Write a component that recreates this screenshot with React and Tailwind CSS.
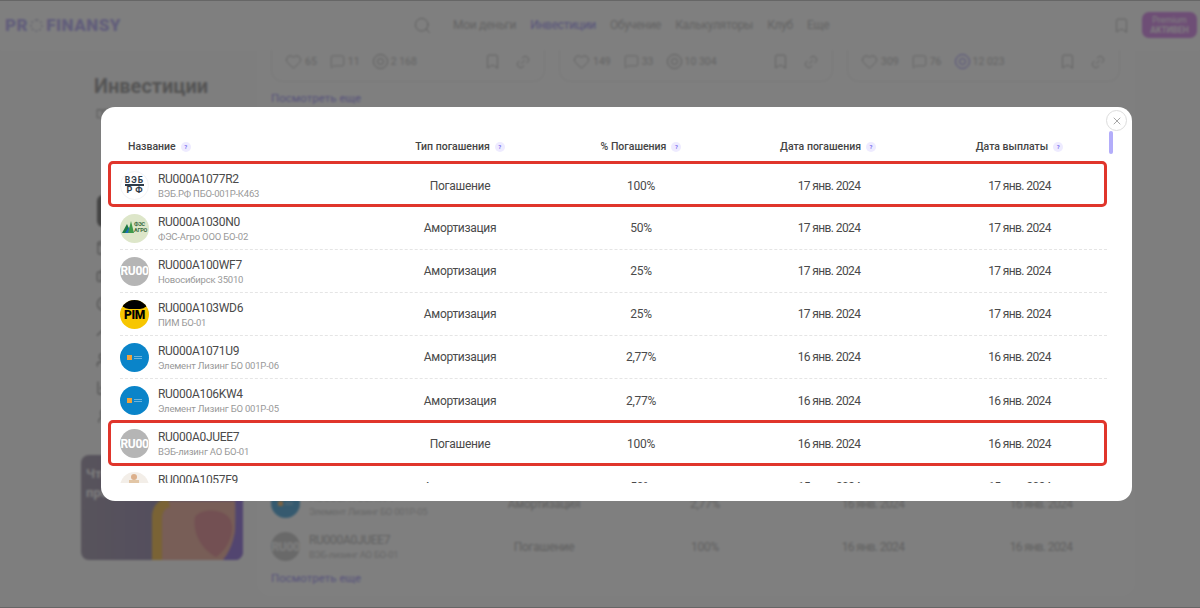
import { Search, Bookmark, Heart, MessageSquare, Link2, X, BookOpen, Briefcase, Wallet, CircleDollarSign, Users, TrendingUp, ChartLine, UserRound } from 'lucide-react'

const rows = [
  { code: 'RU000A1077R2', sub: 'ВЭБ.РФ ПБО-001Р-К463', type: 'Погашение', pct: '100%', date: '17 янв. 2024', pay: '17 янв. 2024', logo: 'veb', mark: true },
  { code: 'RU000A1030N0', sub: 'ФЭС-Агро ООО БО-02', type: 'Амортизация', pct: '50%', date: '17 янв. 2024', pay: '17 янв. 2024', logo: 'fes' },
  { code: 'RU000A100WF7', sub: 'Новосибирск 35010', type: 'Амортизация', pct: '25%', date: '17 янв. 2024', pay: '17 янв. 2024', logo: 'ru' },
  { code: 'RU000A103WD6', sub: 'ПИМ БО-01', type: 'Амортизация', pct: '25%', date: '17 янв. 2024', pay: '17 янв. 2024', logo: 'pim' },
  { code: 'RU000A1071U9', sub: 'Элемент Лизинг БО 001Р-06', type: 'Амортизация', pct: '2,77%', date: '16 янв. 2024', pay: '16 янв. 2024', logo: 'element' },
  { code: 'RU000A106KW4', sub: 'Элемент Лизинг БО 001Р-05', type: 'Амортизация', pct: '2,77%', date: '16 янв. 2024', pay: '16 янв. 2024', logo: 'element' },
  { code: 'RU000A0JUEE7', sub: 'ВЭБ-лизинг АО БО-01', type: 'Погашение', pct: '100%', date: '16 янв. 2024', pay: '16 янв. 2024', logo: 'ru', mark: true },
  { code: 'RU000A1057F9', sub: 'Сибирский КХП БО-01', type: 'Амортизация', pct: '50%', date: '15 янв. 2024', pay: '15 янв. 2024', logo: 'person' },
]

const backRows = [
  { code: 'RU000A106KW4', sub: 'Элемент Лизинг БО 001Р-05', type: 'Амортизация', pct: '2,77%', date: '16 янв. 2024', logo: 'element' },
  { code: 'RU000A0JUEE7', sub: 'ВЭБ-лизинг АО БО-01', type: 'Погашение', pct: '100%', date: '16 янв. 2024', logo: 'ru' },
]

const gridCols = 'grid grid-cols-[250px_180px_182px_192px_183px] items-center'

function Logo({ kind }) {
  if (kind === 'veb') {
    return (
      <div className="w-[29px] h-[29px] rounded-full border border-gray-100 bg-white flex flex-col items-center justify-center text-[#2c3a47] leading-none">
        <span className="text-[8.5px] font-bold tracking-[1px] leading-[8px] border-b-2 border-[#2c3a47]">ВЭБ</span>
        <span className="text-[9px] font-bold tracking-[3px] pl-[3px] leading-[9px]">РФ</span>
      </div>
    )
  }
  if (kind === 'fes') {
    return (
      <div className="relative w-[29px] h-[29px] rounded-full bg-[#dde6c9] overflow-hidden">
        <svg className="absolute inset-0" viewBox="0 0 29 29">
          <path d="M2 19 7 10l4 9z" fill="#1f7a45" />
          <path d="M5 19 9 13l3 6z" fill="#1d6fb8" />
          <path d="M8 19 11 7l3 12z" fill="#3f9a4a" />
        </svg>
        <span className="absolute left-[14px] top-[7px] w-[14px] text-[5.5px] font-bold leading-[6px] text-[#3c6b3f]">ФЭС АГРО</span>
      </div>
    )
  }
  if (kind === 'pim') {
    return (
      <div className="relative w-[29px] h-[29px] rounded-full bg-[#f7c600] overflow-hidden flex items-center justify-center">
        <div className="absolute top-0 left-0 right-0 h-[9px] bg-black rounded-b-[14px]" />
        <span className="text-[12px] font-black text-black leading-none mt-[1px]">PIM</span>
      </div>
    )
  }
  if (kind === 'element') {
    return (
      <div className="w-[29px] h-[29px] rounded-full bg-[#0a84c9] flex items-center justify-center gap-[2px]">
        <div className="w-[5px] h-[5px] bg-[#f2a33a]" />
        <div className="flex flex-col gap-[1px]">
          <div className="w-[8px] h-px bg-white/40" />
          <div className="w-[8px] h-px bg-white/40" />
        </div>
      </div>
    )
  }
  if (kind === 'person') {
    return (
      <div className="relative w-[29px] h-[29px] rounded-full bg-[#f3eee8] overflow-hidden">
        <div className="absolute left-[11px] top-[2px] w-[6px] h-[6px] rounded-full bg-[#dcb08c]" />
        <div className="absolute left-[9px] top-[8px] w-[10px] h-[14px] bg-[#e2c6a6]" />
      </div>
    )
  }
  return (
    <div className="w-[29px] h-[29px] rounded-full bg-[#b5b5b5] flex items-center justify-center overflow-hidden">
      <span className="text-[12px] font-bold text-white leading-none">RU00</span>
    </div>
  )
}

function Hint() {
  return (
    <span className="inline-flex w-[10px] h-[10px] rounded-full bg-[#eeebff] items-center justify-center text-[6px] text-[#7a6ff0] font-bold">?</span>
  )
}

function Head({ label }) {
  return (
    <div className="flex items-center justify-center gap-[5px] text-[10.5px] font-medium text-[#444]">
      {label}
      <Hint />
    </div>
  )
}

function Stats({ like, comm, views, active }) {
  return (
    <div className="flex items-center text-[10.5px] text-[#c8c8c8] w-full">
      <Heart size={17} strokeWidth={1.2} className="text-[#bbb]" />
      <span className="ml-[3px]">{like}</span>
      <MessageSquare size={15} strokeWidth={1.2} className="text-[#bbb] ml-[13px]" />
      <span className="ml-[3px]">{comm}</span>
      <div className={`ml-[13px] w-[15px] h-[15px] rounded-full border flex items-center justify-center ${active ? 'border-[#a49bf8]' : 'border-[#bbb]'}`}>
        <div className={`w-[7px] h-[7px] rounded-full border ${active ? 'border-[#a49bf8]' : 'border-[#bbb]'}`} />
      </div>
      <span className="ml-[3px]">{views}</span>
      <Bookmark size={17} strokeWidth={1.2} className="text-[#bbb] ml-auto" />
      <Link2 size={16} strokeWidth={1.2} className="text-[#bbb] ml-[14px] -rotate-45" />
    </div>
  )
}

function PageBehind() {
  const nav = ['Мои деньги', 'Инвестиции', 'Обучение', 'Калькуляторы', 'Клуб', 'Еще']
  const icons = [Wallet, Briefcase, CircleDollarSign, TrendingUp, Users, ChartLine, UserRound]
  return (
    <div className="h-full flex flex-col bg-[#fdfdfd]">
      {/* Header */}
      <header className="h-[50px] flex items-center shrink-0 bg-white pr-[3px]">
        <div className="ml-[5px] w-[395px] shrink-0 flex items-center text-[17px] font-black text-[#c4bcf6] tracking-[0.5px] leading-none">
          PR
          <span className="mx-[2px] w-[13px] h-[13px] rounded-full border-2 border-dotted border-[#d4d4e2]" />
          <span className="ml-[1px]">FINANSY</span>
        </div>
        <Search size={19} strokeWidth={1.2} className="ml-[13px] shrink-0 text-[#bbb]" />
        <nav className="ml-[21px] flex gap-[14px] text-[12px] tracking-[-0.3px] text-[#c8c8c8] whitespace-nowrap">
          {nav.map(n => (
            <span key={n} className={n === 'Инвестиции' ? 'text-[#b0a8f6]' : ''}>{n}</span>
          ))}
        </nav>
        <Bookmark size={17} strokeWidth={1.2} className="ml-auto shrink-0 text-[#bbb]" />
        <div className="ml-[12px] w-[55px] h-[26px] shrink-0 rounded-[7px] bg-[#dc9cec] flex flex-col items-center justify-center text-[8.5px] leading-[10px] text-white">
          <span>Premium</span>
          <span className="font-semibold">АКТИВЕН</span>
        </div>
      </header>

      <div className="flex-1 flex min-h-0">
        {/* Sidebar */}
        <aside className="ml-[81px] w-[162px] shrink-0 pt-[25px] flex flex-col">
          <div className="pl-[13px] text-[20px] font-bold text-[#aaa] leading-[22px]">Инвестиции</div>
          <BookOpen size={13} className="ml-[15px] mt-[11px] text-[#bbb]" />
          <div className="ml-[16px] mt-[74px] h-[32px] w-[60px] rounded-[6px] bg-[#888] shrink-0" />
          <div className="mt-[13px] flex flex-col gap-[12px] pl-[15px]">
            {icons.map((I, i) => <I key={i} size={16} className="text-[#aaa]" />)}
          </div>
          <div className="mt-[31px] h-[105px] shrink-0 rounded-[8px] relative overflow-hidden bg-gradient-to-r from-[#b0a8b8] via-[#a89cbc] to-[#b09ad8]">
            <div className="pt-[9px] pl-[5px] text-[13px] font-semibold leading-[19px] text-white">
              Что<br />про
            </div>
            <svg className="absolute inset-0" viewBox="0 0 162 105">
              <path d="M72 105C70 80 70 60 84 46h70v59z" fill="#f0bcae" />
              <path d="M71 105V62c0-10 6-18 16-18l2 8c-5 1-8 5-8 12v41z" fill="#f4c76a" />
              <path d="M114 62c6-9 28-9 35 2 6 12-2 30-14 38-12-6-24-22-21-40z" fill="#e6a0a6" />
              <path d="M154 40h8v65h-20c12-14 16-40 12-65z" fill="#a48ae0" />
            </svg>
          </div>
        </aside>

        {/* Content */}
        <main className="ml-[15px] w-[876px] mb-[13px] px-[13px] bg-white rounded-b-xl">
          <div className="grid grid-cols-[274px_274px_273px] gap-x-[14px]">
            {[['65', '11', '2 168'], ['149', '33', '10 304'], ['309', '76', '12 023']].map((s, i) => (
              <div key={i} className="h-[32px] border border-t-0 border-[#f1f1f1] rounded-b-xl px-[13px] pb-[8px] flex items-center">
                <Stats like={s[0]} comm={s[1]} views={s[2]} active={i === 2} />
              </div>
            ))}
          </div>
          <div className="mt-[8px] text-[11.5px] text-[#b0a8f6]">Посмотреть еще</div>
          <div className="mt-[375px]">
            {backRows.map(r => (
              <div key={r.code} className="grid grid-cols-[200px_146px_176px_160px_176px] items-center h-[43px] text-[12px] tracking-[-0.3px] text-[#c0c0c0] text-center">
                <div className="flex items-center gap-[9px] text-left">
                  <div className="opacity-60"><Logo kind={r.logo} /></div>
                  <div className="pt-[2px]">
                    <div className="leading-[15px] whitespace-nowrap">{r.code}</div>
                    <div className="text-[9.5px] leading-[14px] text-[#d0d0d0] whitespace-nowrap">{r.sub}</div>
                  </div>
                </div>
                <span>{r.type}</span>
                <span>{r.pct}</span>
                <span className="tracking-[-0.6px]">{r.date}</span>
                <span className="tracking-[-0.6px]">{r.date}</span>
              </div>
            ))}
          </div>
          <div className="mt-[2px] text-[11.5px] text-[#b0a8f6]">Посмотреть еще</div>
        </main>
      </div>
    </div>
  )
}

export default function App() {
  return (
    <div className="relative w-[1200px] h-[608px] overflow-hidden font-['Roboto',sans-serif]">
      <PageBehind />

      {/* Overlay */}
      <div className="absolute inset-0 bg-black/50 backdrop-blur-[1px] border-y border-[#666]" />

      {/* Modal */}
      <div className="absolute left-[101px] top-[107px] w-[1031px] h-[394px] bg-white rounded-[14px]">
        <button className="absolute left-[1005px] top-[3px] w-[21px] h-[21px] rounded-full bg-white border border-[#ddd] flex items-center justify-center text-[#777] z-10">
          <X size={12} strokeWidth={1.3} />
        </button>
        <div className="absolute left-[1008px] top-[24px] w-[4px] h-[23px] rounded-full bg-[#b3adfa]" />

        <div className={`${gridCols} ml-[19px] w-[987px] pt-[25px] h-[54px]`}>
          <div className="pl-[8px] flex items-center gap-[5px] text-[10.5px] font-medium text-[#444]">
            Название
            <Hint />
          </div>
          <Head label="Тип погашения" />
          <Head label="% Погашения" />
          <Head label="Дата погашения" />
          <div className="pl-[8px]"><Head label="Дата выплаты" /></div>
        </div>

        <div className="h-[322px] overflow-hidden pl-[19px] pt-[3px]">
          <div className="w-[987px]">
            {rows.map((r, i) => (
              <div key={r.code} className={`relative ${gridCols} h-[43px] text-[12px] tracking-[-0.3px] text-[#4a4a4a] ${i < 6 && !rows[i + 1].mark && !r.mark ? 'border-b border-dashed border-[#e5e5e5]' : ''}`}>
                <div className="flex items-center gap-[9px]">
                  <Logo kind={r.logo} />
                  <div className="pt-[2px]">
                    <div className="leading-[15px] whitespace-nowrap">{r.code}</div>
                    <div className="text-[9.5px] tracking-[-0.2px] leading-[14px] text-[#999] whitespace-nowrap">{r.sub}</div>
                  </div>
                </div>
                <div className="text-center">{r.type}</div>
                <div className="text-center">{r.pct}</div>
                <div className="text-center tracking-[-0.6px] pl-[2px]">{r.date}</div>
                <div className="text-center tracking-[-0.6px] pl-[8px]">{r.pay}</div>
                {r.mark && (
                  <div className={`absolute left-[-12px] right-0 h-[46px] border-[3px] border-[#e0352b] rounded-[5px] pointer-events-none ${i === 0 ? 'top-[-3px]' : 'top-[-2px]'}`} />
                )}
              </div>
            ))}
          </div>
        </div>
      </div>
    </div>
  )
}
